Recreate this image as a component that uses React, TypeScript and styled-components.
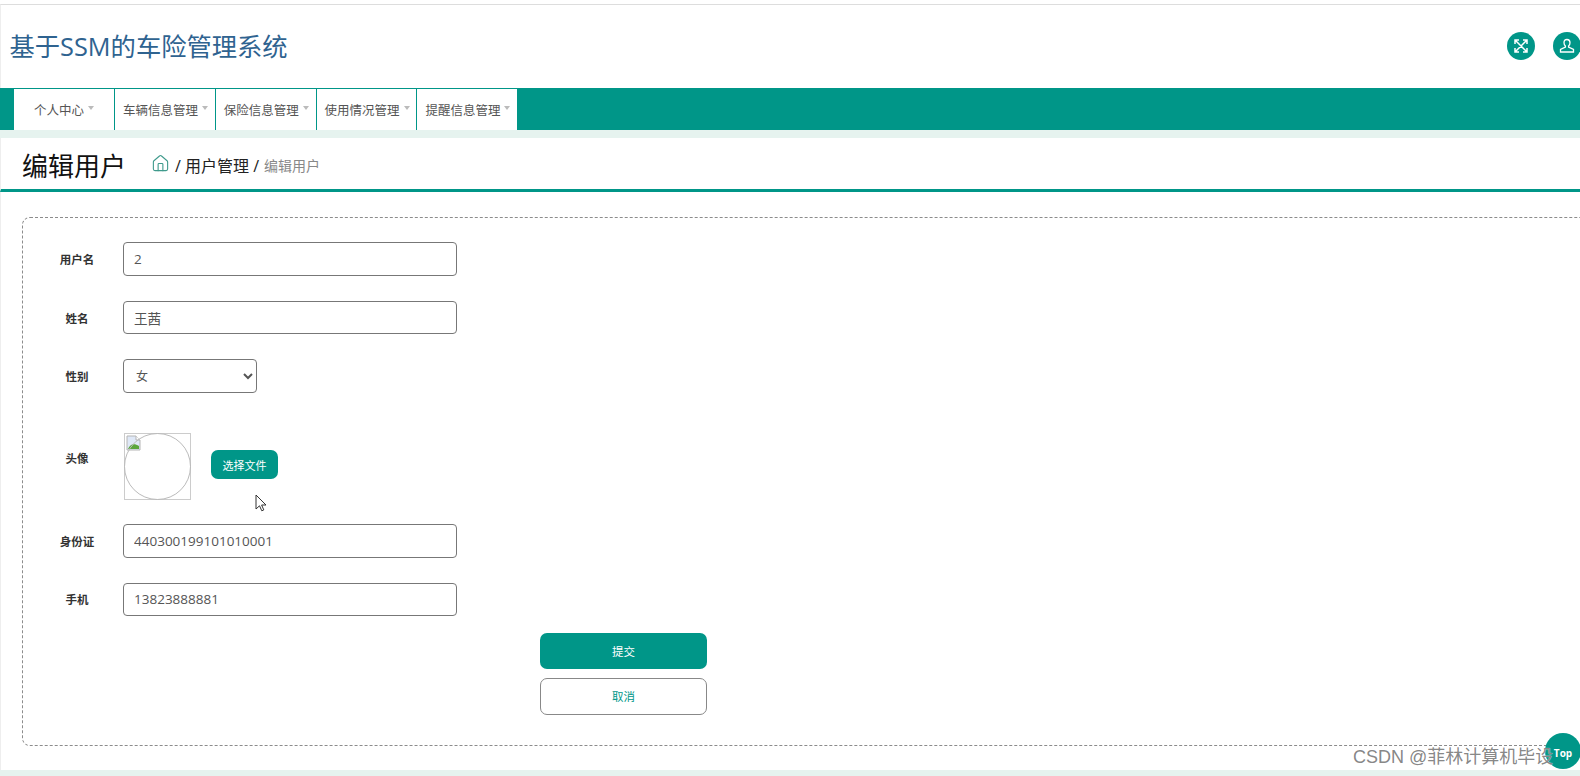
import React from 'react'
import styled, { createGlobalStyle } from 'styled-components'
import { House } from 'lucide-react'

const TEAL = '#009688'
const FONT = '"Open Sans", "Noto Sans CJK SC", sans-serif'

const GlobalStyle = createGlobalStyle`
  html, body {
    margin: 0;
    padding: 0;
    height: 776px;
    overflow: hidden;
    background: #fff;
    font-family: ${FONT};
  }
  * { box-sizing: border-box; }
`

const menus = ['个人中心', '车辆信息管理', '保险信息管理', '使用情况管理', '提醒信息管理']

const fields = [
  { label: '用户名', value: '2' },
  { label: '姓名', value: '王茜' },
]

const idFields = [
  { label: '身份证', value: '440300199101010001' },
  { label: '手机', value: '13823888881' },
]

const App: React.FC = () => {
  return (
    <Page>
      <GlobalStyle />
      <Header>
        <Title>基于SSM的车险管理系统</Title>
        <HeaderIcons>
          <RoundIcon>
            <svg width="16" height="16" viewBox="0 0 16 16" fill="none" stroke="#fff" strokeWidth="1.5">
              <path d="M2 2l12 12M14 2L2 14M2 6V2h4M10 2h4v4M14 10v4h-4M6 14H2v-4" />
            </svg>
          </RoundIcon>
          <RoundIcon>
            <svg width="16" height="16" viewBox="0 0 16 16" fill="none" stroke="#fff" strokeWidth="1.3">
              <path d="M8 1.500c-2 0-3 1.400-3 3.200 0 1.400.6 2.600 1.400 3.200v1.200L1.500 11.500v2.500h13v-2.500L9.600 9.100V7.900c.8-.6 1.400-1.800 1.400-3.200 0-1.800-1-3.200-3-3.200z" />
            </svg>
          </RoundIcon>
        </HeaderIcons>
      </Header>

      <Nav>
        {menus.map((m, i) => (
          <NavItem key={m} $first={i === 0}>
            {m}
            <Caret />
          </NavItem>
        ))}
      </Nav>
      <Band />

      <Crumbs>
        <CrumbTitle>编辑用户</CrumbTitle>
        <HomeIcon size={19} strokeWidth={1.4} />
        <CrumbText>/ 用户管理 /</CrumbText>
        <CrumbCurrent>编辑用户</CrumbCurrent>
      </Crumbs>

      <Main>
        <FormBox>
          {fields.map(f => (
            <Row key={f.label}>
              <Label>{f.label}</Label>
              <TextInput readOnly value={f.value} />
            </Row>
          ))}
          <SelectRow>
            <Label>性别</Label>
            <Select defaultValue="女">
              <option>男</option>
              <option>女</option>
            </Select>
          </SelectRow>
          <AvatarRow>
            <AvatarLabel>头像</AvatarLabel>
            <Avatar>
              <BrokenImage width="16" height="16" viewBox="0 0 16 16">
                <path d="M1 1h9l4 4v10H1z" fill="#dfe8f7" stroke="#b5b5b5" strokeWidth="1" />
                <path d="M10 1v4h4" fill="#fff" stroke="#b5b5b5" strokeWidth="1" />
                <path d="M2 14c2-5 6-6 11-3v3z" fill="#5aa63c" />
              </BrokenImage>
            </Avatar>
            <FileButton>选择文件</FileButton>
          </AvatarRow>
          {idFields.map(f => (
            <Row key={f.label}>
              <Label>{f.label}</Label>
              <TextInput readOnly value={f.value} />
            </Row>
          ))}
          <Actions>
            <PrimaryButton>提交</PrimaryButton>
            <GhostButton>取消</GhostButton>
          </Actions>
        </FormBox>
      </Main>
      <BottomBand />

      <Pointer width="12" height="18" viewBox="0 0 12 18">
        <path d="M1 1v14l3.500-3.200 2.300 5 2-.9-2.200-4.900H11z" fill="#fff" stroke="#333" strokeWidth="1" />
      </Pointer>
      <TopButton>Top</TopButton>
      <Watermark>CSDN @菲林计算机毕设</Watermark>
    </Page>
  )
}

const Page = styled.div`
  position: relative;
  width: 1580px;
  height: 776px;
  overflow: hidden;
  padding-top: 4px;
`

const Header = styled.header`
  display: flex;
  align-items: center;
  justify-content: space-between;
  height: 84px;
  padding: 0 0 4px 8.500px;
  border-top: 1px solid #ddd;
  border-left: 1px solid #eee;
`

const Title = styled.h1`
  margin: 0;
  font-size: 25.300px;
  font-weight: 400;
  color: #2f6390;
`

const HeaderIcons = styled.div`
  display: flex;
  gap: 18px;
  margin-right: -1px;
  margin-top: 3px;
`

const RoundIcon = styled.span`
  display: flex;
  align-items: center;
  justify-content: center;
  width: 28px;
  height: 28px;
  border-radius: 50%;
  background: ${TEAL};
`

const Nav = styled.nav`
  display: flex;
  gap: 1px;
  height: 42px;
  padding-left: 14px;
  background: ${TEAL};
`

const NavItem = styled.div<{ $first?: boolean }>`
  display: flex;
  align-items: center;
  justify-content: ${p => (p.$first ? 'center' : 'flex-start')};
  width: ${p => (p.$first ? '100px' : '99.800px')};
  margin-top: 1px;
  padding-left: ${p => (p.$first ? '0' : '8px')};
  background: #fff;
  color: #555;
  font-size: 12.500px;
`

const Caret = styled.i`
  width: 0;
  height: 0;
  margin-left: 4px;
  margin-bottom: 3px;
  border-style: solid;
  border-width: 4px 3.500px 0;
  border-color: #bbb transparent transparent;
`

const Band = styled.div`
  height: 8px;
  background: #e6f3ef;
`

const Crumbs = styled.div`
  display: flex;
  align-items: center;
  height: 54px;
  padding: 3px 0 0 21px;
  border-bottom: 3px solid ${TEAL};
  border-left: 1px solid #eee;
`

const CrumbTitle = styled.h2`
  margin: 0 25px 0 0;
  font-size: 26px;
  font-weight: 400;
  color: #111;
`

const HomeIcon = styled(House)`
  color: #3f9a8c;
  margin: -3px 5px 0 0;
`

const CrumbText = styled.span`
  font-size: 16px;
  color: #222;
`

const CrumbCurrent = styled.span`
  margin-left: 5px;
  font-size: 14px;
  color: #888;
`

const Main = styled.main`
  padding: 25px 0 24px 21px;
  border-left: 1px solid #eee;
`

const FormBox = styled.form`
  width: 1600px;
  height: 529px;
  padding: 24.300px 0 0 0;
  border: 1px dashed #8c8c8c;
  border-radius: 8px;
`

const Row = styled.div`
  display: flex;
  align-items: center;
  height: 33.500px;
  margin-bottom: 25px;
`

const SelectRow = styled(Row)`
  margin-bottom: 40px;
`

const AvatarRow = styled.div`
  display: flex;
  height: 67px;
  margin-bottom: 24.300px;
`

const Label = styled.label`
  flex: none;
  width: 100px;
  text-align: center;
  padding-left: 8px;
  font-size: 11.500px;
  font-weight: 700;
  color: #333;
`

const AvatarLabel = styled(Label)`
  padding-top: 17px;
`

const TextInput = styled.input`
  width: 334px;
  height: 33.500px;
  padding: 0 10px;
  border: 1px solid #777;
  border-radius: 4px;
  outline: none;
  background: #fff;
  color: #555;
  font-family: ${FONT};
  font-size: 13.500px;
`

const Select = styled.select`
  width: 134px;
  height: 33.500px;
  padding: 0 8px;
  border: 1px solid #777;
  border-radius: 4px;
  background: #fff;
  color: #555;
  font-family: ${FONT};
  font-size: 12px;
`

const Avatar = styled.div`
  position: relative;
  width: 67px;
  height: 67px;
  margin-left: 1px;
  border: 1px solid #ccc;
  &::after {
    content: '';
    position: absolute;
    inset: -1px;
    border: 1px solid #bbb;
    border-radius: 50%;
  }
`

const BrokenImage = styled.svg`
  position: absolute;
  top: 1px;
  left: 1px;
`

const FileButton = styled.button`
  align-self: flex-start;
  width: 67px;
  height: 29px;
  margin: 17.500px 0 0 20px;
  border: none;
  border-radius: 7px;
  background: ${TEAL};
  color: #fff;
  font-family: ${FONT};
  font-size: 11px;
`

const Actions = styled.div`
  display: flex;
  flex-direction: column;
  gap: 9px;
  width: 167px;
  margin: -8.600px 0 0 517px;
`

const PrimaryButton = styled.button`
  height: 36.600px;
  border: none;
  border-radius: 7px;
  background: ${TEAL};
  color: #fff;
  font-family: ${FONT};
  font-size: 11.500px;
`

const GhostButton = styled.button`
  height: 36.600px;
  border: 1px solid #888;
  border-radius: 7px;
  background: #fff;
  color: ${TEAL};
  font-family: ${FONT};
  font-size: 11.500px;
`

const BottomBand = styled.div`
  height: 6px;
  background: #e6f3ef;
`

const Pointer = styled.svg`
  position: absolute;
  left: 255px;
  top: 494px;
`

const TopButton = styled.div`
  position: absolute;
  left: 1545px;
  top: 733px;
  width: 36px;
  height: 36px;
  padding-top: 2px;
  text-align: center;
  line-height: 36px;
  border-radius: 50%;
  background: ${TEAL};
  color: #fff;
  font-size: 10px;
  font-weight: 700;
`

const Watermark = styled.div`
  position: absolute;
  left: 1353px;
  top: 745px;
  font-family: "Liberation Sans", "Noto Sans CJK SC", sans-serif;
  font-size: 18px;
  line-height: 24px;
  color: rgba(120, 120, 120, 0.9);
  text-shadow: 0 0 1px #fff;
  white-space: nowrap;
`

export default App
